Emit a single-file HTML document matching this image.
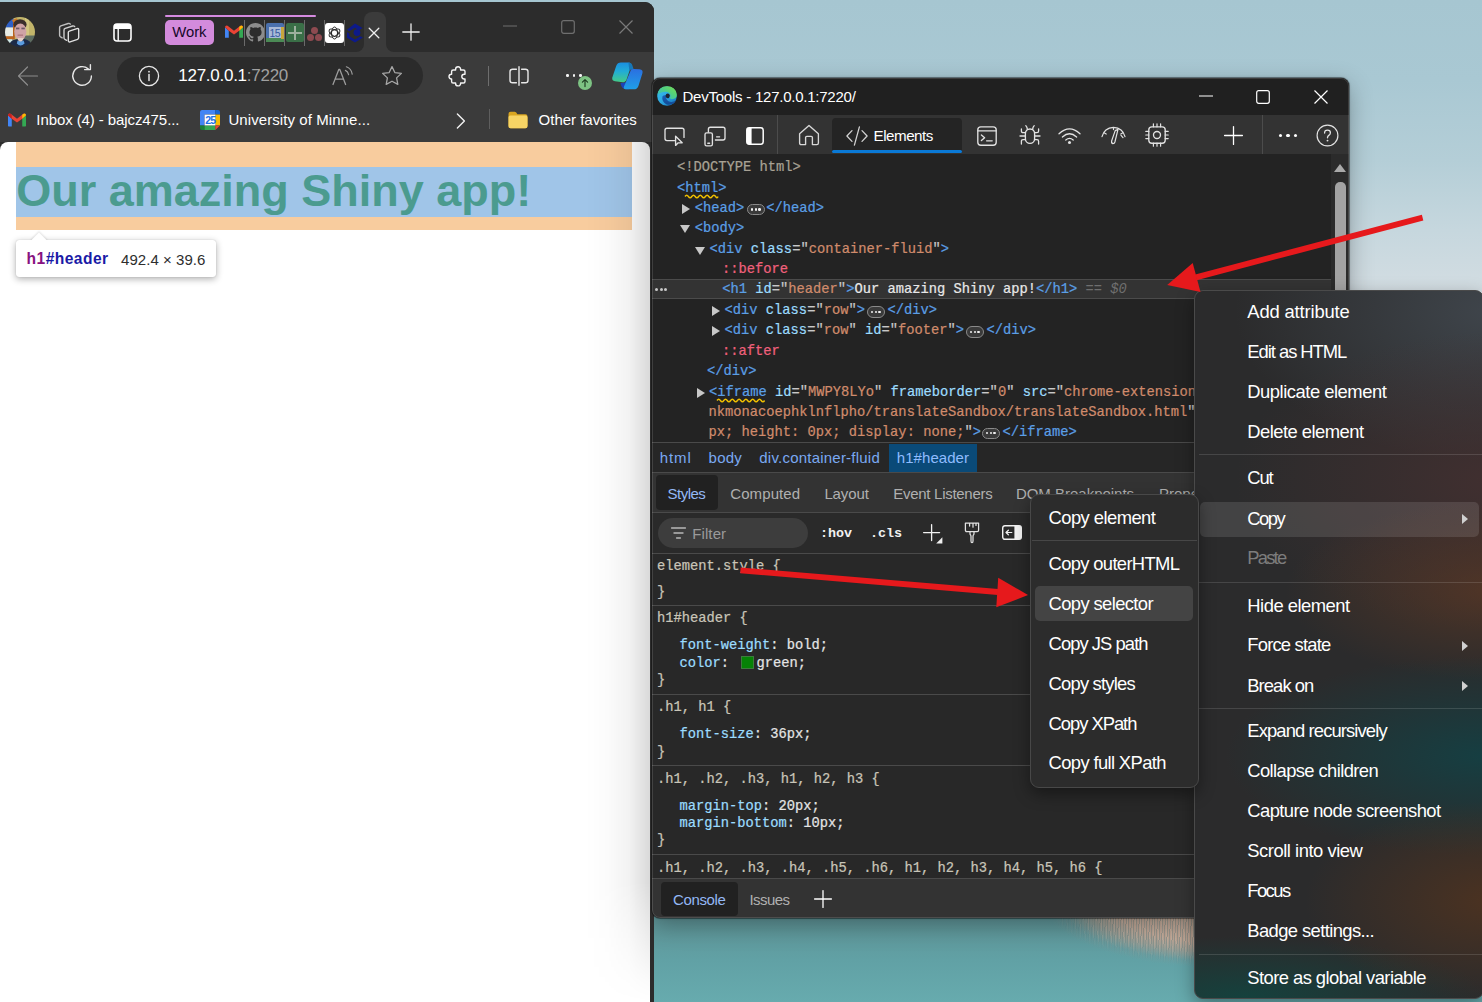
<!DOCTYPE html>
<html lang="en">
<head>
<meta charset="utf-8">
<title>DevTools - Copy selector</title>
<style>
*{box-sizing:border-box;margin:0;padding:0}
html,body{width:1482px;height:1002px;overflow:hidden}
body{position:relative;font-family:"Liberation Sans",sans-serif;background:#8fbcc2;-webkit-font-smoothing:antialiased}
.abs{position:absolute}
.t{position:absolute;white-space:nowrap;line-height:1}
.mono{font-family:"Liberation Mono","DejaVu Sans Mono",monospace}
svg{position:absolute;overflow:visible}
/* ---------- wallpaper ---------- */
#wall{left:0;top:0;width:1482px;height:1002px;
 background:
  radial-gradient(ellipse 178px 66px at 1222px 902px,rgba(196,170,152,1) 0,rgba(190,166,150,1) 62%,rgba(172,158,146,.75) 76%,rgba(130,150,150,.25) 90%,rgba(120,150,150,0) 100%),
  linear-gradient(180deg,#a6c6d1 0px,#a9c8d3 80px,#b4ced7 160px,#c6d7de 230px,#d3dde2 292px,#a4c3cc 420px,#8db5bb 640px,#6f9c9f 860px,#5e9396 917px,#5f999c 935px,#61a1a5 960px,#67abae 1002px);}
/* ---------- edge browser ---------- */
#edge{left:0;top:2px;width:654px;height:1000px;background:#2c2c2c;border-top-right-radius:9px;overflow:hidden}
#tabbar{left:0;top:0;width:654px;height:50px;background:#2c2c2c}
#toolbar{left:0;top:50px;width:654px;height:90px;background:#3b3b3b}
#page{left:0;top:140px;width:650px;height:860px;background:#fff;border-radius:8px 8px 0 0;overflow:hidden}

/* edge chrome details */
.ic{stroke:#e6e6e6;fill:none;stroke-width:1.4;stroke-linecap:round;stroke-linejoin:round}
.icg{stroke:#9a9a9a;fill:none;stroke-width:1.4;stroke-linecap:round;stroke-linejoin:round}
#avatar{left:5px;top:15px;width:30px;height:30px;border-radius:50%;overflow:hidden;
 background:
  radial-gradient(ellipse 8px 10px at 15px 14px,#d9a894 0,#cf9a86 70%,rgba(207,154,134,0) 100%),
  radial-gradient(ellipse 9px 5px at 15px 5px,#4a3a30 0,#4a3a30 80%,rgba(74,58,48,0) 100%),
  radial-gradient(ellipse 14px 8px at 15px 30px,#2f4f7d 0,#2a4168 80%,rgba(42,65,104,0) 100%),
  linear-gradient(90deg,#5b86c9 0,#d8dfe6 22%,#c9a36b 30%,#b7ad6a 60%,#a9a55c 100%)}
#workline{left:165px;top:13px;width:151px;height:2px;background:#d58be0;border-radius:1px}
#work{left:165px;top:18px;width:49px;height:25px;background:#d38bdc;border-radius:5px}
#acttab{left:364px;top:10px;width:22px;height:42px;background:#3b3b3b;border-radius:8px 8px 0 0}
#pill{left:117px;top:5px;width:306px;height:37px;border-radius:19px;background:#2b2b2b}

/* ---------- context menus ---------- */
#cm{left:1194px;top:289.5px;width:290px;height:709px;border-radius:9px;border:1px solid #4a4a4a;overflow:hidden;
 box-shadow:0 6px 18px rgba(0,0,0,.35);
 background:
  radial-gradient(ellipse 190px 100px at 300px 610px,rgba(84,52,30,.8),rgba(84,52,30,0) 100%),
  radial-gradient(ellipse 260px 100px at 290px 465px,rgba(18,66,70,.85),rgba(18,66,70,0) 100%),
  radial-gradient(ellipse 210px 90px at 300px 300px,rgba(92,56,36,.72),rgba(92,56,36,0) 100%),
  radial-gradient(ellipse 260px 150px at 300px 190px,rgba(78,50,50,.62),rgba(78,50,50,0) 100%),
  radial-gradient(ellipse 260px 150px at 300px 20px,rgba(70,78,86,.75),rgba(70,78,86,0) 100%),
  radial-gradient(ellipse 240px 60px at 50px 705px,rgba(20,66,62,.95),rgba(20,66,62,0) 100%),
  #2b2b2c}
#sm{left:1030.3px;top:493.5px;width:168.7px;height:294px;border-radius:9px;border:1px solid #484848;background:#2c2c2c;box-shadow:0 6px 16px rgba(0,0,0,.4)}
.mi{position:absolute;white-space:nowrap;line-height:1;font-size:18.4px;color:#fff;left:52px}
.si{position:absolute;white-space:nowrap;line-height:1;font-size:18.4px;color:#fff;left:17px}
.sep{position:absolute;left:4px;right:0;height:1px;background:rgba(255,255,255,.13)}
.arr{position:absolute;left:267px;width:0;height:0;border-left:6px solid #d0d0d0;border-top:5px solid transparent;border-bottom:5px solid transparent}
/* ---------- devtools ---------- */
#dt::after{content:'';position:absolute;left:0;top:0;right:0;bottom:0;border:1px solid rgba(255,255,255,.13);border-radius:8px;pointer-events:none}
#dti{left:-652px;top:-78px;width:1482px;height:1002px}
.dI{stroke:#e2e2e2;fill:none;stroke-width:1.35;stroke-linecap:round;stroke-linejoin:round}
.m{position:absolute;white-space:pre;line-height:20px;height:20px;font-family:"Liberation Mono","DejaVu Sans Mono",monospace;font-size:13.75px;color:#d6d6d6;-webkit-text-stroke:0.22px currentColor}
.tg{color:#5b9fe6}.an{color:#9cdcfe}.av{color:#d08b6c}.ps{color:#f0607c}.gy{color:#8f8f8f}
.sel{color:#c9c5b8}.pn{color:#9cdcfe}.pv{color:#e4e4e4}
.tri{position:absolute;width:0;height:0}
.trir{border-left:8px solid #c8c8c8;border-top:5.5px solid transparent;border-bottom:5.5px solid transparent}
.trid{border-top:8px solid #c8c8c8;border-left:5.5px solid transparent;border-right:5.5px solid transparent}
.dots{position:absolute;width:17.5px;height:11.5px;border:1px solid #8a8a8a;border-radius:6px;background:#3a3a3a}
.dots i{position:absolute;top:3.6px;width:2.4px;height:2.4px;border-radius:50%;background:#f0f0f0}
.hl{position:absolute;left:652px;width:697px;height:1px;background:#4a4a4a}
.ui{font-family:"Liberation Sans",sans-serif}

#dt{left:652px;top:78px;width:697px;height:840px;background:#242424;border-radius:8px;overflow:hidden;box-shadow:0 0 0 1px rgba(0,0,0,.35)}
</style>
</head>
<body>
<div id="wall" class="abs"></div>
<div class="abs" style="left:1040px;top:916px;width:170px;height:60px;background:repeating-linear-gradient(93deg,rgba(84,120,122,.34) 0,rgba(84,120,122,.34) 1px,rgba(0,0,0,0) 1px,rgba(0,0,0,0) 2.6px),repeating-linear-gradient(86deg,rgba(214,190,170,.30) 0,rgba(214,190,170,.30) 1px,rgba(0,0,0,0) 1px,rgba(0,0,0,0) 4.3px);-webkit-mask-image:radial-gradient(ellipse 176px 64px at 182px -14px,#000 0,#000 70%,rgba(0,0,0,.5) 88%,transparent 100%);mask-image:radial-gradient(ellipse 176px 64px at 182px -14px,#000 0,#000 70%,rgba(0,0,0,.5) 88%,transparent 100%)"></div>

<!-- ================= EDGE BROWSER ================= -->
<div id="edge" class="abs">
 <div id="tabbar" class="abs">
  <svg style="left:5px;top:15px" width="30" height="30" viewBox="0 0 30 30">
   <defs><clipPath id="avc"><circle cx="15" cy="15" r="15"/></clipPath><filter id="avb"><feGaussianBlur stdDeviation="0.55"/></filter></defs>
   <g clip-path="url(#avc)"><g filter="url(#avb)">
    <rect x="-2" y="-2" width="34" height="34" fill="#c2b56a"/>
    <rect x="20" y="-2" width="4" height="22" fill="#d2c680"/>
    <rect x="19" y="18.5" width="13" height="14" fill="#5d6c60"/>
    <rect x="-2" y="-2" width="11" height="34" fill="#9aa8a0"/>
    <rect x="-2" y="2" width="10.5" height="8.5" fill="#2f60c6"/>
    <rect x="-2" y="10.5" width="10" height="8.8" fill="#e8ebe4"/>
    <rect x="-2" y="19.3" width="11" height="3" fill="#c0651f"/>
    <rect x="-2" y="22.3" width="9" height="6" fill="#cfe6e4"/>
    <rect x="8" y="4" width="1.8" height="18" fill="#b8621e"/>
    <path d="M7 3 L12 1.2 L12.6 3.4 L8 5 Z" fill="#c9792a"/>
    <ellipse cx="15" cy="7.4" rx="6.6" ry="5.2" fill="#3a2f29"/>
    <ellipse cx="15.3" cy="14.6" rx="6.1" ry="8.2" fill="#cfa3a6"/>
    <rect x="11" y="10.6" width="3.4" height="1.7" fill="#6d5965"/>
    <rect x="16.4" y="10.6" width="3.4" height="1.7" fill="#6d5965"/>
    <rect x="12.6" y="17.6" width="5.4" height="1.1" fill="#a86f78"/>
    <rect x="12.8" y="21" width="5.6" height="4" fill="#e2cdc6"/>
    <path d="M2 32 Q5 22.2 12.4 22 L15.4 26.4 L18.6 22 Q26 22.2 28.5 32 Z" fill="#1c2a46"/>
    <path d="M12.6 23.4 Q15.6 25.6 18.6 23.4 L19.6 26.4 Q15.6 30.4 11.8 26.6 Z" fill="#5a9ce0"/>
   </g></g>
  </svg>
  <!-- workspaces icon -->
  <svg class="ic" style="left:58px;top:20px" width="24" height="22" viewBox="0 0 24 22">
   <path d="M4.2 15.8 L2.6 14.9 Q1.6 14.3 1.6 13.2 V5.6 Q1.6 4.3 2.8 3.9 L10.2 1.5 Q11.6 1.1 12.3 2.1" stroke="#bdbdbd"/>
   <path d="M8.6 18.3 L7 17.4 Q6 16.8 6 15.7 V8.1 Q6 6.8 7.2 6.4 L14.6 4 Q16 3.6 16.7 4.6" stroke="#cfcfcf"/>
   <path d="M11.3 9.1 L18.9 6.6 Q20.7 6 20.7 7.9 V15.6 Q20.7 16.9 19.5 17.3 L12.1 19.8 Q10.3 20.4 10.3 18.5 V10.6 Q10.3 9.4 11.3 9.1 Z" stroke="#e0e0e0"/>
  </svg>
  <!-- tab actions icon -->
  <svg style="left:113px;top:21px" width="19" height="19" viewBox="0 0 19 19">
   <rect x="1" y="1" width="17" height="17" rx="3" fill="none" stroke="#fff" stroke-width="1.6"/>
   <path d="M1 4 Q1 1 4 1 H15 Q18 1 18 4 V6 H1 Z" fill="#fff"/>
   <path d="M5.2 6 V18" stroke="#fff" stroke-width="1.4"/>
  </svg>
  <div id="workline" class="abs"></div>
  <div id="work" class="abs"></div>
  <span class="t" id="tWork" style="left:172.30px;top:23px;font-size:14.8px;color:#15082a;letter-spacing:-0.018px">Work</span>
  <div class="abs" style="left:356px;top:42px;width:8px;height:8px;background:#3b3b3b"></div>
  <div class="abs" style="left:348px;top:34px;width:16px;height:16px;background:#2c2c2c;border-bottom-right-radius:8px"></div>
  <div class="abs" style="left:386px;top:42px;width:8px;height:8px;background:#3b3b3b"></div>
  <div class="abs" style="left:386px;top:34px;width:16px;height:16px;background:#2c2c2c;border-bottom-left-radius:8px"></div>
  <!-- favicons -->
  <svg style="left:225px;top:23px" width="18" height="14" viewBox="0 0 20 15">
   <path d="M0 2.2 V14 H4.2 V6 Z" fill="#4285f4"/><path d="M20 2.2 V14 H15.8 V6 Z" fill="#34a853"/>
   <path d="M0 2.2 Q0 0.4 2 0.4 Q2.8 0.4 3.6 1 L10 6 L16.4 1 Q17.2 0.4 18 0.4 Q20 0.4 20 2.2 L15.8 6 L10 10.4 L4.2 6 Z" fill="#ea4335"/>
   <path d="M15.8 1.6 L18 0.4 Q20 0.4 20 2.2 L15.8 6 Z" fill="#fbbc04"/>
  </svg>
  <div class="abs" style="left:244px;top:18px;width:1px;height:26px;background:#6a6a6a"></div>
  <svg style="left:246px;top:21px" width="19" height="19" viewBox="0 0 16 16"><path fill="#8c8c8c" d="M8 0C3.58 0 0 3.58 0 8c0 3.54 2.29 6.53 5.47 7.59.4.07.55-.17.55-.38 0-.19-.01-.82-.01-1.49-2.01.37-2.53-.49-2.69-.94-.09-.23-.48-.94-.82-1.13-.28-.15-.68-.52-.01-.53.63-.01 1.08.58 1.23.82.72 1.21 1.87.87 2.33.66.07-.52.28-.87.51-1.07-1.78-.2-3.64-.89-3.64-3.95 0-.87.31-1.59.82-2.15-.08-.2-.36-1.02.08-2.12 0 0 .67-.21 2.2.82.64-.18 1.32-.27 2-.27s1.36.09 2 .27c1.53-1.04 2.2-.82 2.2-.82.44 1.1.16 1.92.08 2.12.51.56.82 1.27.82 2.15 0 3.07-1.87 3.75-3.65 3.95.29.25.54.73.54 1.48 0 1.07-.01 1.93-.01 2.2 0 .21.15.46.55.38A8.01 8.01 0 0016 8c0-4.42-3.58-8-8-8z"/></svg>
  <div class="abs" style="left:264px;top:18px;width:1px;height:26px;background:#6a6a6a"></div>
  <div class="abs" style="left:266px;top:21px;width:18px;height:19px;background:#4a70ad;border-radius:2px"></div>
  <div class="abs" style="left:266px;top:36px;width:18px;height:4px;background:#4b8a55"></div>
  <div class="abs" style="left:281px;top:25px;width:3px;height:12px;background:#c7a63c"></div>
  <div class="abs" style="left:269px;top:25px;width:12px;height:11px;background:#a9b9d6"></div>
  <span class="t" style="left:269.5px;top:25.5px;font-size:10.5px;color:#3559a0;letter-spacing:-0.6px">15</span>
  <div class="abs" style="left:284px;top:18px;width:1px;height:26px;background:#6a6a6a"></div>
  <div class="abs" style="left:286px;top:21px;width:18px;height:19px;background:#3a6f47;border-radius:2px"></div>
  <div class="abs" style="left:288px;top:29.5px;width:14px;height:2px;background:#9db09e"></div>
  <div class="abs" style="left:294px;top:24px;width:2px;height:14px;background:#9db09e"></div>
  <div class="abs" style="left:304px;top:18px;width:1px;height:26px;background:#6a6a6a"></div>
  <div class="abs" style="left:311px;top:25px;width:7px;height:7px;border-radius:50%;background:#8e4a50"></div>
  <div class="abs" style="left:307px;top:32px;width:7px;height:7px;border-radius:50%;background:#8e4a50"></div>
  <div class="abs" style="left:315px;top:32px;width:7px;height:7px;border-radius:50%;background:#8e4a50"></div>
  <div class="abs" style="left:324px;top:18px;width:1px;height:26px;background:#6a6a6a"></div>
  <div class="abs" style="left:325px;top:21px;width:19px;height:20px;background:#fff;border-radius:3px"></div>
  <svg style="left:327px;top:23px" width="15" height="16" viewBox="0 0 15 16" fill="none" stroke="#222" stroke-width="1">
   <ellipse cx="7.5" cy="8" rx="3" ry="6" /><ellipse cx="7.5" cy="8" rx="3" ry="6" transform="rotate(60 7.5 8)"/><ellipse cx="7.5" cy="8" rx="3" ry="6" transform="rotate(-60 7.5 8)"/>
  </svg>
  <div class="abs" style="left:344px;top:18px;width:1px;height:26px;background:#6a6a6a"></div>
  <svg style="left:346px;top:21px" width="18" height="20" viewBox="0 0 18 20">
   <path d="M9 0.5 L16.5 5 L13 7.2 L9 4.8 L3.2 8.2 L1 6.8 Z" fill="#0d1a8a"/>
   <path d="M1 9 L3.4 10.4 V13.2 L9 16.4 L14.5 13.2 L17 14.6 L9 19.4 L1 14.8 Z" fill="#0d1a8a"/>
   <circle cx="11" cy="9.6" r="3.4" fill="#0d1a8a"/>
  </svg>
  <div id="acttab" class="abs"></div>
  <svg class="ic" style="left:368px;top:25px" width="12" height="12" viewBox="0 0 12 12"><path d="M1.2 1.2 L10.8 10.8 M10.8 1.2 L1.2 10.8" stroke="#ededed" stroke-width="1.3"/></svg>
  <svg class="ic" style="left:402px;top:21px" width="18" height="18" viewBox="0 0 18 18"><path d="M9 0.8 V17.2 M0.8 9 H17.2" stroke="#f0f0f0" stroke-width="1.3"/></svg>
  <!-- window controls -->
  <svg style="left:503px;top:23px" width="14" height="2" viewBox="0 0 14 2"><path d="M0 1 H14" stroke="#6f6f6f" stroke-width="1.2"/></svg>
  <svg style="left:561px;top:18px" width="14" height="14" viewBox="0 0 14 14"><rect x="0.7" y="0.7" width="12.6" height="12.6" rx="2" fill="none" stroke="#6f6f6f" stroke-width="1.2"/></svg>
  <svg style="left:619px;top:18px" width="14" height="14" viewBox="0 0 14 14"><path d="M0.5 0.5 L13.5 13.5 M13.5 0.5 L0.5 13.5" stroke="#7a7a7a" stroke-width="1.2"/></svg>
 </div>
 <div id="toolbar" class="abs">
  <!-- back -->
  <svg class="icg" style="left:17px;top:13.5px" width="22" height="20" viewBox="0 0 22 20"><path d="M20.5 10 H1.5 M10.5 1 L1.5 10 L10.5 19" stroke="#8c8c8c" stroke-width="1.2"/></svg>
  <!-- refresh -->
  <svg class="ic" style="left:71px;top:12px" width="24" height="24" viewBox="0 0 24 24"><path d="M20.4 11.9 A9.3 9.3 0 1 1 17.2 4.9" stroke-width="1.4"/><path d="M13.6 5.6 H19.4 V0.6" stroke-width="1.4"/></svg>
  <div id="pill" class="abs"></div>
  <!-- info -->
  <svg class="ic" style="left:138px;top:13px" width="22" height="22" viewBox="0 0 22 22"><circle cx="11" cy="11" r="9.6" stroke-width="1.3"/><path d="M11 9.6 V15.6" stroke-width="1.5"/><circle cx="11" cy="6.7" r="0.9" fill="#e6e6e6" stroke="none"/></svg>
  <span class="t" id="tUrl" style="left:178.30px;top:15px;font-size:17px;color:#fff;letter-spacing:-0.268px">127.0.0.1<span style="color:#a0a0a0">:7220</span></span>
  <!-- read aloud -->
  <svg class="icg" style="left:332px;top:14px" width="22" height="20" viewBox="0 0 22 20"><path d="M1 18.5 L6.8 3.4 H7.8 L13.6 18.5 M3.2 13.2 H11.4" stroke="#9c9c9c" stroke-width="1.3"/><path d="M13.4 4.4 Q16 5.4 16.6 8.6 M14.4 0.8 Q19.4 2.6 20.2 8.2" stroke="#9c9c9c" stroke-width="1.2"/></svg>
  <!-- star -->
  <svg class="icg" style="left:381px;top:13px" width="22" height="22" viewBox="0 0 22 22"><path d="M11 1.6 L13.8 7.6 L20.4 8.4 L15.6 12.9 L16.8 19.4 L11 16.2 L5.2 19.4 L6.4 12.9 L1.6 8.4 L8.2 7.6 Z" stroke="#a6a6a6" stroke-width="1.3"/></svg>
  <!-- extensions puzzle -->
  <svg class="ic" style="left:448px;top:13px" width="21" height="22" viewBox="0 0 21 22"><path d="M7.6 5 V4.2 A2.5 2.5 0 0 1 12.6 4.2 V5 H15.4 Q17 5 17 6.6 V9.2 H16.2 A2.4 2.4 0 0 0 16.2 14 H17 V16.4 Q17 18 15.4 18 H12.6 V18.4 A2.5 2.5 0 0 1 7.6 18.4 V18 H5.2 Q3.6 18 3.6 16.4 V14 H3.4 A2.4 2.4 0 0 1 3.4 9.2 H3.6 V6.6 Q3.6 5 5.2 5 Z" stroke="#f4f4f4" stroke-width="1.4"/></svg>
  <div class="abs" style="left:488px;top:14px;width:1px;height:20px;background:#6e6e6e"></div>
  <!-- split screen -->
  <svg class="ic" style="left:509px;top:14px" width="20" height="20" viewBox="0 0 20 20"><path d="M7.4 3.2 H3.6 Q1 3.2 1 5.8 V14.2 Q1 16.8 3.6 16.8 H7.4 M12.6 3.2 H16.4 Q19 3.2 19 5.8 V14.2 Q19 16.8 16.4 16.8 H12.6 M10 0.8 V19.2" stroke="#e8e8e8" stroke-width="1.4"/></svg>
  <!-- more ... -->
  <div class="abs" style="left:566px;top:22px;width:2.6px;height:2.6px;border-radius:50%;background:#f2f2f2"></div>
  <div class="abs" style="left:572.6px;top:22px;width:2.6px;height:2.6px;border-radius:50%;background:#f2f2f2"></div>
  <div class="abs" style="left:579.2px;top:22px;width:2.6px;height:2.6px;border-radius:50%;background:#f2f2f2"></div>
  <div class="abs" style="left:578px;top:24px;width:14px;height:14px;border-radius:50%;background:#7dc383"></div>
  <svg style="left:578px;top:24px" width="14" height="14" viewBox="0 0 14 14"><path d="M7 10.6 V3.8 M4.4 6.2 L7 3.6 L9.6 6.2" fill="none" stroke="#1f3d22" stroke-width="1.2" stroke-linecap="round" stroke-linejoin="round"/></svg>
  <!-- copilot -->
  <svg style="left:610px;top:8px" width="36" height="32" viewBox="610 60 36 32">
   <defs>
    <linearGradient id="cpa" x1="0" y1="0" x2="0" y2="1"><stop offset="0" stop-color="#1a8fe0"/><stop offset=".45" stop-color="#22acd6"/><stop offset="1" stop-color="#44cb86"/></linearGradient>
    <linearGradient id="cpb" x1="0" y1="0" x2="0" y2="1"><stop offset="0" stop-color="#2b6fe0"/><stop offset="1" stop-color="#1f9fe8"/></linearGradient>
   </defs>
   <path d="M620.5 83 Q621.5 89.2 626 89.2 L629 89.2 L630 82 Z" fill="#1b43b8"/>
   <path d="M631.2 69.2 Q632 68.8 634 68.9 L639.6 69.2 Q643.4 69.6 642.4 73.2 L638.6 85.4 Q637.4 89.4 633.4 89.3 L625.6 89.2 Q623 89 624 86.4 Z" fill="url(#cpb)"/>
   <path d="M616.2 66 Q617.4 62.6 621 62.6 L628.4 62.6 Q632 62.8 631 66.2 L626.6 79.4 Q625.6 82.2 622.6 82.2 L615 81.2 Q611.4 80.6 612.4 77.2 Z" fill="url(#cpa)"/>
   <path d="M628.4 62.6 Q631.4 62.6 632.4 65.4 L633.6 68.9 Q632 68.8 631.2 69.2 L629.4 71 Z" fill="#1677b8"/>
  </svg>
  <!-- bookmarks bar -->
  <svg style="left:8px;top:61px" width="18" height="14" viewBox="0 0 20 15">
   <path d="M0 2.2 V14 Q0 14.6 0.8 14.6 H4.2 V6 Z" fill="#4285f4"/><path d="M20 2.2 V14 Q20 14.6 19.2 14.6 H15.8 V6 Z" fill="#34a853"/>
   <path d="M0 2.2 Q0 0.4 2 0.4 Q2.8 0.4 3.6 1 L10 6 L16.4 1 Q17.2 0.4 18 0.4 Q20 0.4 20 2.2 L15.8 6 L10 10.4 L4.2 6 Z" fill="#ea4335"/>
   <path d="M15.8 1.6 L17.4 0.5 Q20 0 20 2.2 L15.8 6 Z" fill="#fbbc04"/>
   <path d="M4.2 1.6 L2.6 0.5 Q0 0 0 2.2 L4.2 6 Z" fill="#c5221f"/>
  </svg>
  <span class="t" id="tInbox" style="left:36.30px;top:60px;font-size:15px;color:#fff;letter-spacing:-0.087px">Inbox (4) - bajcz475...</span>
  <svg style="left:200px;top:58px" width="20" height="20" viewBox="0 0 20 20">
   <path d="M2 0 H15.4 V4.6 H4.6 V15.4 H0 V2 Q0 0 2 0 Z" fill="#4285f4"/>
   <path d="M15.4 0 H18 Q20 0 20 2 V4.6 H15.4 Z" fill="#1967d2"/>
   <rect x="15.4" y="4.6" width="4.6" height="10.8" fill="#fbbc04"/>
   <path d="M0 15.4 H4.6 V20 H2 Q0 20 0 18 Z" fill="#188038"/>
   <rect x="4.6" y="15.4" width="10.8" height="4.6" fill="#34a853"/>
   <path d="M15.4 15.4 H20 L15.4 20 Z" fill="#ea4335"/>
   <rect x="4.6" y="4.6" width="10.8" height="10.8" fill="#fff"/>
  </svg>
  <span class="t" style="left:205.2px;top:62.5px;font-size:10.5px;color:#1a73e8;letter-spacing:-0.7px;font-weight:bold">25</span>
  <span class="t" id="tUniv" style="left:228.40px;top:60px;font-size:15px;color:#fff;letter-spacing:0.077px">University of Minne...</span>
  <svg class="ic" style="left:456px;top:61px" width="10" height="16" viewBox="0 0 10 16"><path d="M1.4 1 L8.4 8 L1.4 15" stroke="#f0f0f0" stroke-width="1.4"/></svg>
  <div class="abs" style="left:489px;top:57px;width:1px;height:20px;background:#5e5e5e"></div>
  <svg style="left:508px;top:59px" width="20" height="18" viewBox="0 0 20 18">
   <path d="M0.5 3 Q0.5 0.8 2.6 0.8 H6.6 Q7.6 0.8 8.2 1.6 L9.4 3.2 H17.4 Q19.5 3.2 19.5 5.2 V15 Q19.5 17.2 17.4 17.2 H2.6 Q0.5 17.2 0.5 15 Z" fill="#d9a520"/>
   <path d="M0.5 6.4 Q0.5 4.6 2.4 4.6 H17.6 Q19.5 4.6 19.5 6.4 V15 Q19.5 17.2 17.4 17.2 H2.6 Q0.5 17.2 0.5 15 Z" fill="#f7d465"/>
  </svg>
  <span class="t" id="tOther" style="left:538.60px;top:60px;font-size:15px;color:#fff;letter-spacing:-0.019px">Other favorites</span>
 </div>
 <div id="page" class="abs">
  <div class="abs" style="left:16px;top:0;width:616px;height:88px;background:#f8cc9e"></div>
  <div class="abs" style="left:16px;top:25px;width:616px;height:50px;background:#a0c5e8"></div>
  <span class="t" id="tH1" style="left:16.2px;top:23.4px;font-size:45px;font-weight:bold;color:#4b9b8f;line-height:52px">Our amazing Shiny app!</span>
  <!-- devtools window shadow falling on the page -->
  <div class="abs" style="left:585px;top:0;width:65px;height:860px;background:linear-gradient(90deg,rgba(0,0,0,0) 0,rgba(0,0,0,.014) 35%,rgba(0,0,0,.05) 68%,rgba(0,0,0,.15) 100%);-webkit-mask-image:linear-gradient(180deg,#000 0,#000 740px,rgba(0,0,0,.55) 790px,rgba(0,0,0,.12) 840px,transparent 860px);mask-image:linear-gradient(180deg,#000 0,#000 740px,rgba(0,0,0,.55) 790px,rgba(0,0,0,.12) 840px,transparent 860px)"></div>
  <!-- inspect tooltip -->
  <div class="abs" style="left:16px;top:98px;width:200px;height:36.5px;background:#fff;border-radius:3px;box-shadow:0 2px 7px rgba(0,0,0,.32),0 0 1px rgba(0,0,0,.25)"></div>
  <div class="abs" style="left:32.5px;top:92.5px;width:12px;height:12px;background:#fff;transform:rotate(45deg);box-shadow:-1px -1px 2px rgba(0,0,0,.10)"></div>
  <div class="abs" style="left:24px;top:98px;width:40px;height:10px;background:#fff"></div>
  <span class="t" id="tTip1" style="left:26.60px;top:109.3px;font-size:15.6px;font-weight:bold;color:#881280;letter-spacing:0.433px">h1<span style="color:#1a1aa6">#header</span></span>
  <span class="t" id="tTip2" style="left:121.00px;top:109.6px;font-size:15px;color:#2e2e2e;letter-spacing:0.047px">492.4 × 39.6</span>
 </div>
</div>

<!-- ================= DEVTOOLS ================= -->
<div class="abs" style="left:654px;top:30px;width:828px;height:972px;overflow:hidden"><div class="abs" style="left:-2px;top:48px;width:697px;height:840px;border-radius:8px;box-shadow:0 7px 24px rgba(0,0,0,.30),0 0 3px rgba(0,0,0,.25)"></div></div>
<div id="dt" class="abs"><div id="dti" class="abs">
  <!-- title bar -->
  <div class="abs" style="left:652px;top:78px;width:697px;height:37px;background:#202020"></div>
  <svg style="left:657px;top:86px" width="20" height="20" viewBox="0 0 20 20">
   <defs>
    <linearGradient id="eg1" x1="0" y1="0" x2="1" y2="1"><stop offset="0" stop-color="#35c1f1"/><stop offset=".5" stop-color="#2ea8e0"/><stop offset="1" stop-color="#0f6cbd"/></linearGradient>
    <linearGradient id="eg2" x1="0" y1="1" x2="1" y2="0"><stop offset="0" stop-color="#2fb5d8"/><stop offset=".6" stop-color="#52d17c"/><stop offset="1" stop-color="#7fdc4a"/></linearGradient>
    <linearGradient id="eg3" x1="0" y1="0" x2="0" y2="1"><stop offset="0" stop-color="#1b5fb8"/><stop offset="1" stop-color="#114a94"/></linearGradient>
   </defs>
   <circle cx="10" cy="10" r="9.8" fill="url(#eg1)"/>
   <path d="M0.3 9 Q1.4 0.4 10 0.2 Q18.8 0.4 19.8 8.4 Q19.9 11.6 17 12.8 Q13.6 13.8 12.6 12 Q14 10.6 13.2 8.6 Q12 5.8 8.6 5.8 Q3.2 6 0.3 9 Z" fill="url(#eg2)"/>
   <path d="M5.4 10.4 Q4.6 15.6 9.2 18.2 Q12.6 19.8 16.4 17.6 Q18.2 16.4 18.8 14.6 Q15 17 11.6 15.2 Q8.2 13 9.4 9.4 Q7 8.6 5.4 10.4 Z" fill="url(#eg3)"/>
   <path d="M8.6 9.6 Q8.8 7.6 10.8 7.6 Q12.6 7.8 12.8 9.6 Q12.8 11 11.8 11.9 Q10.2 12.6 9.2 11.6 Q8.5 10.8 8.6 9.6 Z" fill="#1c2430"/>
  </svg>
  <span class="t" id="tTitle" style="left:682.50px;top:89px;font-size:15px;color:#fff;letter-spacing:-0.237px">DevTools - 127.0.0.1:7220/</span>
  <svg style="left:1199px;top:95px" width="14" height="2" viewBox="0 0 14 2"><path d="M0 1 H14" stroke="#fff" stroke-width="1.2"/></svg>
  <svg style="left:1256px;top:90px" width="14" height="14" viewBox="0 0 14 14"><rect x="0.7" y="0.7" width="12.6" height="12.6" rx="2" fill="none" stroke="#fff" stroke-width="1.2"/></svg>
  <svg style="left:1314px;top:90px" width="14" height="14" viewBox="0 0 14 14"><path d="M0.5 0.5 L13.5 13.5 M13.5 0.5 L0.5 13.5" stroke="#fff" stroke-width="1.2"/></svg>
  <!-- main toolbar -->
  <div class="abs" style="left:652px;top:115px;width:697px;height:39px;background:#333"></div>
  <!-- inspect -->
  <svg class="dI" style="left:664px;top:127px" width="22" height="20" viewBox="0 0 22 20"><path d="M10.6 13.6 H3 Q1 13.6 1 11.6 V3.2 Q1 1.2 3 1.2 H18 Q20 1.2 20 3.2 V10.4"/><path d="M11.6 9.2 V18.4 L14.2 15.8 H18.2 Z"/></svg>
  <!-- device -->
  <svg class="dI" style="left:704px;top:126px" width="22" height="21" viewBox="0 0 22 21"><path d="M4.4 6 V3.2 Q4.4 1.2 6.4 1.2 H19 Q21 1.2 21 3.2 V12 Q21 14 19 14 H11.4"/><rect x="1" y="6.8" width="7.4" height="13" rx="1.6"/><path d="M3.8 17.2 H5.6 M12.6 10.8 H15.6" /></svg>
  <!-- dock -->
  <svg style="left:746px;top:127px" width="18" height="18" viewBox="0 0 18 18"><rect x="0.8" y="0.8" width="16.4" height="16.4" rx="2.4" fill="none" stroke="#fff" stroke-width="1.5"/><path d="M3 0.8 H5.6 V17.2 H3 Q0.8 17.2 0.8 15 V3 Q0.8 0.8 3 0.8 Z" fill="#fff"/></svg>
  <div class="abs" style="left:776.5px;top:115px;width:1.5px;height:39px;background:#4c4c4c"></div>
  <!-- home -->
  <svg class="dI" style="left:798px;top:124px" width="22" height="22" viewBox="0 0 22 22"><path d="M1.6 9.8 L11 1.4 L20.4 9.8 V19 Q20.4 20.6 18.8 20.6 H14.4 V13.6 Q14.4 12.4 13.2 12.4 H8.8 Q7.6 12.4 7.6 13.6 V20.6 H3.2 Q1.6 20.6 1.6 19 Z" stroke="#d8d8d8"/></svg>
  <!-- elements tab -->
  <div class="abs" style="left:832px;top:118px;width:130px;height:35px;background:#242424;border-radius:4px 4px 2px 2px"></div>
  <div class="abs" style="left:832px;top:150px;width:130px;height:3px;background:#0a79d6;border-radius:1.5px"></div>
  <svg class="dI" style="left:846px;top:126px" width="22" height="20" viewBox="0 0 22 20"><path d="M6 4.6 L0.9 10 L6 15.4 M16 4.6 L21.1 10 L16 15.4 M13.4 0.8 L8.4 19.2" stroke="#d0d0d0" stroke-width="1.3"/></svg>
  <span class="t" id="tElements" style="left:873.61px;top:127.6px;font-size:15.2px;color:#fff;letter-spacing:-0.516px">Elements</span>
  <!-- console -->
  <svg class="dI" style="left:977px;top:126px" width="20" height="20" viewBox="0 0 20 20"><rect x="0.8" y="0.8" width="18.4" height="18.4" rx="3"/><path d="M0.8 4.8 H19.2 M4.4 9 L7.6 11.8 L4.4 14.6 M9.6 14.8 H15.2"/></svg>
  <!-- bug -->
  <svg class="dI" style="left:1019px;top:124px" width="22" height="22" viewBox="0 0 22 22"><rect x="6.4" y="5" width="9.2" height="14.4" rx="4.6"/><path d="M8.4 5.4 Q8.2 3 6.8 1.6 M13.6 5.4 Q13.8 3 15.2 1.6 M6.4 12 H1 M15.6 12 H21 M6.4 8.6 H4 Q2.4 8.6 2.4 7 V5 M15.6 8.6 H18 Q19.6 8.6 19.6 7 V5 M6.4 15.6 H4 Q2.4 15.6 2.4 17.2 V20 M15.6 15.6 H18 Q19.6 15.6 19.6 17.2 V20" stroke-width="1.3"/></svg>
  <!-- wifi -->
  <svg class="dI" style="left:1058px;top:127px" width="23" height="18" viewBox="0 0 23 18"><path d="M1 6.8 Q11.5 -3 22 6.8 M4.4 10 Q11.5 3.6 18.6 10 M7.8 13 Q11.5 9.8 15.2 13" stroke-width="1.3"/><circle cx="11.5" cy="15.6" r="1.5" fill="#e2e2e2" stroke="none"/></svg>
  <!-- gauge -->
  <svg class="dI" style="left:1101px;top:126px" width="25" height="19" viewBox="0 0 25 19"><path d="M1 10.6 Q3.2 2 12.5 1.4 Q21.8 2 24 10.6 M12.5 1.4 V3.6 M3.4 7 L5.2 8 M21.6 7 L19.8 8 M20 9.4 L22 11.6" stroke-width="1.2"/><path d="M17 3.4 L14.2 4.6 L10.6 15 Q10.2 17.2 12 17.6 Q13.4 17.6 13.9 16 Z" stroke-width="1.2"/></svg>
  <!-- chip -->
  <svg class="dI" style="left:1145px;top:123px" width="24" height="24" viewBox="0 0 24 24"><rect x="3.8" y="3.8" width="16.4" height="16.4" rx="3"/><circle cx="12" cy="12" r="3.5"/><path d="M8.4 3.8 V0.8 M12 3.8 V0.8 M15.6 3.8 V0.8 M8.4 23.2 V20.2 M12 23.2 V20.2 M15.6 23.2 V20.2 M3.8 8.4 H0.8 M3.8 12 H0.8 M3.8 15.6 H0.8 M23.2 8.4 H20.2 M23.2 12 H20.2 M23.2 15.6 H20.2" stroke-width="1.2"/></svg>
  <!-- plus -->
  <svg style="left:1224px;top:126px" width="19" height="19" viewBox="0 0 19 19"><path d="M9.5 0.6 V18.4 M0.6 9.5 H18.4" stroke="#fff" stroke-width="1.3" stroke-linecap="round"/></svg>
  <div class="abs" style="left:1262px;top:115px;width:1px;height:39px;background:#4c4c4c"></div>
  <div class="abs" style="left:1279px;top:134px;width:3.2px;height:3.2px;border-radius:50%;background:#fff"></div>
  <div class="abs" style="left:1286.4px;top:134px;width:3.2px;height:3.2px;border-radius:50%;background:#fff"></div>
  <div class="abs" style="left:1293.8px;top:134px;width:3.2px;height:3.2px;border-radius:50%;background:#fff"></div>
  <svg class="dI" style="left:1316px;top:124px" width="23" height="23" viewBox="0 0 23 23"><circle cx="11.5" cy="11.5" r="10.4" stroke-width="1.2"/><path d="M8.6 9 Q8.6 6.2 11.5 6.2 Q14.4 6.2 14.4 8.8 Q14.4 10.4 12.8 11.4 Q11.5 12.3 11.5 13.8" stroke-width="1.3"/><circle cx="11.5" cy="16.6" r="0.95" fill="#e2e2e2" stroke="none"/></svg>

  <!-- elements panel -->
  <div class="abs" style="left:652px;top:154px;width:697px;height:289px;background:#232323"></div>
  <div class="abs" style="left:652px;top:278.6px;width:681px;height:20.4px;background:#333;border-top:1px solid #4b4b4b;border-bottom:1px solid #4b4b4b"></div>
  <div class="abs" style="left:1331px;top:154px;width:18px;height:289px;background:#2b2b2b"></div>
  <div class="tri" style="left:1334px;top:164px;border-bottom:8.5px solid #a9a9a9;border-left:6px solid transparent;border-right:6px solid transparent"></div>
  <div class="abs" style="left:1335px;top:182px;width:10.5px;height:150px;border-radius:5px;background:#a3a3a3"></div>

  <span class="m" style="left:676.9px;top:157.7px;color:#a8a294">&lt;!DOCTYPE html&gt;</span>
  <span class="m tg" style="left:676.9px;top:179.0px">&lt;html&gt;</span>
  <svg style="left:684.5px;top:194px" width="33" height="5" viewBox="0 0 33 5"><path d="M0 2.5 Q1.7 0 3.4 2.5 T6.8 2.5 T10.2 2.5 T13.6 2.5 T17 2.5 T20.4 2.5 T23.8 2.5 T27.2 2.5 T30.6 2.5 T33 2.5" fill="none" stroke="#f0c000" stroke-width="1.4"/></svg>
  <div class="tri trir" style="left:682px;top:203.6px"></div>
  <span class="m tg" style="left:694.7px;top:199.1px">&lt;head&gt;</span><div class="dots" style="left:747px;top:203.6px"><i style="left:3px"></i><i style="left:6.6px"></i><i style="left:10.2px"></i></div><span class="m tg" style="left:766.3px;top:199.1px">&lt;/head&gt;</span>
  <div class="tri trid" style="left:679.5px;top:225.1px"></div>
  <span class="m tg" style="left:694.7px;top:219.1px">&lt;body&gt;</span>
  <div class="tri trid" style="left:694.5px;top:246.9px"></div>
  <span class="m tg" style="left:709.6px;top:240.4px">&lt;div <span class="an">class</span><span style="color:#c8c8c8">="</span><span class="av">container-fluid</span><span style="color:#c8c8c8">"</span>&gt;</span>
  <span class="m ps" style="left:722.0px;top:260.4px">::before</span>
  <div class="abs" style="left:655px;top:287.6px;width:3px;height:3px;border-radius:50%;background:#c8c8c8"></div>
  <div class="abs" style="left:659.6px;top:287.6px;width:3px;height:3px;border-radius:50%;background:#c8c8c8"></div>
  <div class="abs" style="left:664.2px;top:287.6px;width:3px;height:3px;border-radius:50%;background:#c8c8c8"></div>
  <span class="m tg" id="mH1" style="left:722.3px;top:280.4px">&lt;h1 <span class="an">id</span><span style="color:#c8c8c8">="</span><span class="av">header</span><span style="color:#c8c8c8">"</span>&gt;<span style="color:#e8e8e8">Our amazing Shiny app!</span>&lt;/h1&gt;<span style="color:#6f6f6f;font-style:italic;-webkit-text-stroke:0"> == $0</span></span>
  <div class="tri trir" style="left:712px;top:305.6px"></div>
  <span class="m tg" style="left:724.6px;top:301.1px">&lt;div <span class="an">class</span><span style="color:#c8c8c8">="</span><span class="av">row</span><span style="color:#c8c8c8">"</span>&gt;</span><div class="dots" style="left:867px;top:306.1px"><i style="left:3px"></i><i style="left:6.6px"></i><i style="left:10.2px"></i></div><span class="m tg" style="left:887.6px;top:301.1px">&lt;/div&gt;</span>
  <div class="tri trir" style="left:712px;top:325.9px"></div>
  <span class="m tg" style="left:724.6px;top:321.4px">&lt;div <span class="an">class</span><span style="color:#c8c8c8">="</span><span class="av">row</span><span style="color:#c8c8c8">"</span> <span class="an">id</span><span style="color:#c8c8c8">="</span><span class="av">footer</span><span style="color:#c8c8c8">"</span>&gt;</span><div class="dots" style="left:966px;top:326.4px"><i style="left:3px"></i><i style="left:6.6px"></i><i style="left:10.2px"></i></div><span class="m tg" style="left:986.6px;top:321.4px">&lt;/div&gt;</span>
  <span class="m ps" style="left:722.0px;top:341.7px">::after</span>
  <span class="m tg" style="left:707.1px;top:362.4px">&lt;/div&gt;</span>
  <div class="tri trir" style="left:697px;top:387.7px"></div>
  <span class="m tg" style="left:709.0px;top:383.2px">&lt;iframe <span class="an">id</span><span style="color:#c8c8c8">="</span><span class="av">MWPY8LYo</span><span style="color:#c8c8c8">"</span> <span class="an">frameborder</span><span style="color:#c8c8c8">="</span><span class="av">0</span><span style="color:#c8c8c8">"</span> <span class="an">src</span><span style="color:#c8c8c8">="</span><span class="av">chrome-extension://bpoadfkcbjbfhfodiogcn</span></span>
  <svg style="left:717px;top:398.2px" width="49" height="5" viewBox="0 0 49 5"><path d="M0 2.5 Q1.7 0 3.4 2.5 T6.8 2.5 T10.2 2.5 T13.6 2.5 T17 2.5 T20.4 2.5 T23.8 2.5 T27.2 2.5 T30.6 2.5 T34 2.5 T37.4 2.5 T40.8 2.5 T44.2 2.5 T47.6 2.5" fill="none" stroke="#f0c000" stroke-width="1.4"/></svg>
  <span class="m av" style="left:708.6px;top:402.7px">nkmonacoephklnflpho/translateSandbox/translateSandbox.html<span style="color:#c8c8c8">"</span> <span class="an">style</span></span>
  <span class="m av" style="left:708.6px;top:423.0px">px; height: 0px; display: none;<span style="color:#c8c8c8">"</span><span class="tg">&gt;</span></span><div class="dots" style="left:982px;top:427.5px"><i style="left:3px"></i><i style="left:6.6px"></i><i style="left:10.2px"></i></div><span class="m tg" style="left:1002.6px;top:423.0px">&lt;/iframe&gt;</span>

  <!-- breadcrumbs -->
  <div class="abs" style="left:652px;top:442px;width:697px;height:31px;background:#262626;border-top:1px solid #4a4a4a;border-bottom:1px solid #4a4a4a"></div>
  <div class="abs" style="left:889px;top:444px;width:88px;height:28px;background:#0a4a78"></div>
  <span class="t" id="bc1" style="left:659.80px;top:450px;font-size:15px;color:#7aa9f2;letter-spacing:0.898px">html</span>
  <span class="t" id="bc2" style="left:708.60px;top:450px;font-size:15px;color:#7aa9f2;letter-spacing:0.224px">body</span>
  <span class="t" id="bc3" style="left:759.30px;top:450px;font-size:15px;color:#7aa9f2;letter-spacing:0.222px">div.container-fluid</span>
  <span class="t" id="bc4" style="left:896.80px;top:450px;font-size:15px;color:#8fbcff;letter-spacing:0.058px">h1#header</span>

  <!-- styles tabs -->
  <div class="abs" style="left:652px;top:473px;width:697px;height:40px;background:#333;border-bottom:1px solid #4a4a4a"></div>
  <div class="abs" style="left:656px;top:475px;width:62px;height:35px;background:#212121;border-radius:4px"></div>
  <span class="t" id="st1" style="left:667.50px;top:486px;font-size:15px;color:#93b8f5;letter-spacing:-0.509px">Styles</span>
  <span class="t" id="st2" style="left:730.21px;top:486px;font-size:15px;color:#b0b0b0;letter-spacing:0.105px">Computed</span>
  <span class="t" id="st3" style="left:824.40px;top:486px;font-size:15px;color:#b0b0b0;letter-spacing:-0.114px">Layout</span>
  <span class="t" id="st4" style="left:893.30px;top:486px;font-size:15px;color:#b0b0b0;letter-spacing:-0.285px">Event Listeners</span>
  <span class="t" id="st5" style="left:1015.90px;top:486px;font-size:15px;color:#b0b0b0;letter-spacing:-0.012px">DOM Breakpoints</span>
  <span class="t" id="st6" style="left:1159px;top:486px;font-size:15px;color:#b0b0b0">Properties</span>

  <!-- filter bar -->
  <div class="abs" style="left:652px;top:513px;width:697px;height:41px;background:#2a2a2a;border-bottom:1px solid #4a4a4a"></div>
  <div class="abs" style="left:658px;top:518px;width:150px;height:30px;border-radius:15px;background:#3d3d3d"></div>
  <svg style="left:671px;top:527px" width="15" height="12" viewBox="0 0 15 12"><path d="M0.6 1 H14.4 M3 6 H12 M5.6 11 H9.4" stroke="#b8b8b8" stroke-width="1.4" stroke-linecap="round"/></svg>
  <span class="t" id="tFilter" style="left:692.21px;top:526px;font-size:15px;color:#9a9a9a;letter-spacing:0.113px">Filter</span>
  <span class="t mono" id="tHov" style="left:820px;top:526.5px;font-size:13.4px;font-weight:bold;color:#f2f2f2">:hov</span>
  <span class="t mono" id="tCls" style="left:870px;top:526.5px;font-size:13.4px;font-weight:bold;color:#f2f2f2">.cls</span>
  <svg style="left:923px;top:524px" width="20" height="20" viewBox="0 0 20 20"><path d="M8.6 0.6 V16.6 M0.6 8.6 H16.6" stroke="#f2f2f2" stroke-width="1.3" stroke-linecap="round"/><path d="M19.4 13.2 V19.4 H13.2 Z" fill="#f0f0f0"/></svg>
  <svg class="dI" style="left:964px;top:522px" width="16" height="22" viewBox="0 0 16 22"><path d="M1.4 1 H14.6 V8.2 Q14.6 9.6 13.2 9.6 H2.8 Q1.4 9.6 1.4 8.2 Z M5.6 1 V4 M9 1 V5.2 M12 1 V3.4 M6 9.6 V11.4 Q6 12.4 6.6 13 Q7 13.6 7 14.6 V19 Q7 20.6 8 20.6 Q9 20.6 9 19 V14.6 Q9 13.6 9.4 13 Q10 12.4 10 11.4 V9.6" stroke-width="1.25"/></svg>
  <svg style="left:1001.6px;top:525.2px" width="20" height="15" viewBox="0 0 20 15"><rect x="0.7" y="0.7" width="18.6" height="13.6" rx="2.2" fill="none" stroke="#f2f2f2" stroke-width="1.4"/><path d="M12.4 0.7 H17.1 Q19.3 0.7 19.3 2.9 V12.1 Q19.3 14.3 17.1 14.3 H12.4 Z" fill="#f2f2f2"/><path d="M9.8 7.5 H4.2 M6.4 5.2 L4 7.5 L6.4 9.8" fill="none" stroke="#f2f2f2" stroke-width="1.2" stroke-linecap="round" stroke-linejoin="round"/></svg>

  <!-- styles rules -->
  <div class="abs" style="left:652px;top:554px;width:697px;height:324px;background:#282828"></div>
  <span class="m sel" style="left:657px;top:557.1px">element.style {</span>
  <span class="m sel" style="left:657px;top:582.6px">}</span>
  <div class="hl" style="top:604.5px"></div>
  <span class="m sel" style="left:657px;top:609.3px">h1#header {</span>
  <span class="m pn" style="left:679.5px;top:636.1px">font-weight<span class="pv">: bold;</span></span>
  <span class="m pn" style="left:679.5px;top:653.8px">color<span class="pv">: </span></span>
  <div class="abs" style="left:741px;top:656.2px;width:13px;height:13px;background:#068206;border:1px solid #3c7c3c"></div>
  <span class="m pv" style="left:756.5px;top:653.8px">green;</span>
  <span class="m sel" style="left:657px;top:671.3px">}</span>
  <div class="hl" style="top:694px"></div>
  <span class="m sel" style="left:657px;top:698.3px">.h1, h1 {</span>
  <span class="m pn" style="left:679.5px;top:724.8px">font-size<span class="pv">: 36px;</span></span>
  <span class="m sel" style="left:657px;top:742.6px">}</span>
  <div class="hl" style="top:764.5px"></div>
  <span class="m sel" style="left:657px;top:770.1px">.h1, .h2, .h3, h1, h2, h3 {</span>
  <span class="m pn" style="left:679.5px;top:796.6px">margin-top<span class="pv">: 20px;</span></span>
  <span class="m pn" style="left:679.5px;top:814.3px">margin-bottom<span class="pv">: 10px;</span></span>
  <span class="m sel" style="left:657px;top:831.3px">}</span>
  <div class="hl" style="top:854px"></div>
  <span class="m sel" style="left:657px;top:859.4px">.h1, .h2, .h3, .h4, .h5, .h6, h1, h2, h3, h4, h5, h6 {</span>

  <!-- drawer -->
  <div class="abs" style="left:652px;top:878px;width:697px;height:40px;background:#333;border-top:1px solid #4a4a4a"></div>
  <div class="abs" style="left:661px;top:881.5px;width:77px;height:34.5px;background:#212121;border-radius:4px"></div>
  <span class="t" id="dr1" style="left:672.90px;top:892px;font-size:15px;color:#93b8f5;letter-spacing:-0.332px">Console</span>
  <span class="t" id="dr2" style="left:749.41px;top:892px;font-size:15px;color:#b0b0b0;letter-spacing:-0.550px">Issues</span>
  <svg style="left:814px;top:890px" width="18" height="18" viewBox="0 0 18 18"><path d="M9 0.6 V17.4 M0.6 9 H17.4" stroke="#fff" stroke-width="1.3" stroke-linecap="round"/></svg>
 </div></div>

<!-- ================= CONTEXT MENUS ================= -->
<div id="cm" class="abs">
  <div class="abs" style="left:5px;top:211px;width:279px;height:35px;border-radius:5px;background:rgba(255,255,255,.115)"></div>
  <span class="mi" id="c1" style="left:52.30px;top:12.78px;letter-spacing:-0.155px">Add attribute</span>
  <span class="mi" id="c2" style="left:52.30px;top:52.58px;letter-spacing:-1.033px">Edit as HTML</span>
  <span class="mi" id="c3" style="left:52.30px;top:92.68px;letter-spacing:-0.481px">Duplicate element</span>
  <span class="mi" id="c4" style="left:52.30px;top:132.78px;letter-spacing:-0.530px">Delete element</span>
  <span class="mi" id="c5" style="left:52.30px;top:178.58px;letter-spacing:-1.155px">Cut</span>
  <span class="mi" id="c6" style="left:52.30px;top:219.18px;letter-spacing:-1.512px">Copy</span>
  <span class="mi" id="c7" style="left:52.30px;top:258.78px;color:#7d7d7d;letter-spacing:-1.800px">Paste</span>
  <span class="mi" id="c8" style="left:52.30px;top:306.18px;letter-spacing:-0.505px">Hide element</span>
  <span class="mi" id="c9" style="left:52.30px;top:345.98px;letter-spacing:-0.806px">Force state</span>
  <span class="mi" id="c10" style="left:52.30px;top:386.18px;letter-spacing:-0.940px">Break on</span>
  <span class="mi" id="c11" style="left:52.30px;top:431.98px;letter-spacing:-0.887px">Expand recursively</span>
  <span class="mi" id="c12" style="left:52.30px;top:471.88px;letter-spacing:-0.609px">Collapse children</span>
  <span class="mi" id="c13" style="left:52.30px;top:511.78px;letter-spacing:-0.578px">Capture node screenshot</span>
  <span class="mi" id="c14" style="left:52.30px;top:551.78px;letter-spacing:-0.478px">Scroll into view</span>
  <span class="mi" id="c15" style="left:52.30px;top:591.68px;letter-spacing:-1.571px">Focus</span>
  <span class="mi" id="c16" style="left:52.30px;top:631.98px;letter-spacing:-0.605px">Badge settings...</span>
  <span class="mi" id="c17" style="left:52.30px;top:678.18px;letter-spacing:-0.564px">Store as global variable</span>
  <div class="sep" style="top:163.8px"></div>
  <div class="sep" style="top:291.2px"></div>
  <div class="sep" style="top:417.2px"></div>
  <div class="sep" style="top:663.4px"></div>
  <div class="arr" style="top:223.5px"></div>
  <div class="arr" style="top:350.3px"></div>
  <div class="arr" style="top:390.5px"></div>
 </div>
<div id="sm" class="abs">
  <div class="abs" style="left:4px;top:91.5px;width:158px;height:35px;border-radius:5px;background:rgba(255,255,255,.115)"></div>
  <span class="si" id="s1" style="left:17.30px;top:14.18px;letter-spacing:-0.569px">Copy element</span>
  <span class="si" id="s2" style="left:17.30px;top:60.18px;letter-spacing:-0.669px">Copy outerHTML</span>
  <span class="si" id="s3" style="left:17.30px;top:100.38px;letter-spacing:-0.626px">Copy selector</span>
  <span class="si" id="s4" style="left:17.30px;top:140.18px;letter-spacing:-0.953px">Copy JS path</span>
  <span class="si" id="s5" style="left:17.30px;top:180.38px;letter-spacing:-0.806px">Copy styles</span>
  <span class="si" id="s6" style="left:17.30px;top:220.18px;letter-spacing:-1.035px">Copy XPath</span>
  <span class="si" id="s7" style="left:17.30px;top:259.98px;letter-spacing:-0.638px">Copy full XPath</span>
  <div class="sep" style="top:45.6px;left:1px;right:1px"></div>
 </div>
<svg id="arrows" style="left:0;top:0" width="1482" height="1002" viewBox="0 0 1482 1002">
  <path d="M1422.6 217.6 L1196 277.4" stroke="#e6191c" stroke-width="5.8" fill="none"/>
  <path d="M1167.2 285.1 L1192.7 263 L1200.5 292 Z" fill="#e6191c"/>
  <path d="M740.4 570.4 L998 592" stroke="#e6191c" stroke-width="5.8" fill="none"/>
  <path d="M1028 595 L998.2 577.7 L996.3 607.3 Z" fill="#e6191c"/>
 </svg>
</body>
</html>
